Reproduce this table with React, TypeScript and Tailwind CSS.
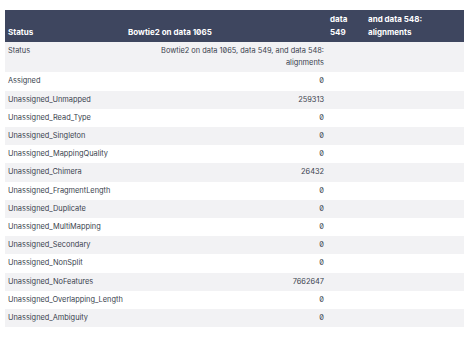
import React from 'react';

const rows: [string, string][] = [
  ['Assigned', '0'],
  ['Unassigned_Unmapped', '259313'],
  ['Unassigned_Read_Type', '0'],
  ['Unassigned_Singleton', '0'],
  ['Unassigned_MappingQuality', '0'],
  ['Unassigned_Chimera', '26432'],
  ['Unassigned_FragmentLength', '0'],
  ['Unassigned_Duplicate', '0'],
  ['Unassigned_MultiMapping', '0'],
  ['Unassigned_Secondary', '0'],
  ['Unassigned_NonSplit', '0'],
  ['Unassigned_NoFeatures', '7662647'],
  ['Unassigned_Overlapping_Length', '0'],
  ['Unassigned_Ambiguity', '0'],
];

const App: React.FC = () => {
  return (
    <div className="w-[474px] h-[351px] bg-white pt-[10px] pl-[5px] font-['Inter',sans-serif] text-[8px] text-[#2c3143] [font-feature-settings:'zero']">
      <table className="w-[459px] table-fixed border-collapse">
        <colgroup>
          <col className="w-[120px]" />
          <col className="w-[202px]" />
          <col className="w-[38px]" />
          <col className="w-[99px]" />
        </colgroup>
        <thead>
          <tr className="bg-[#3e465f] text-white font-bold leading-[12.5px]">
            <th className="px-[3px] pt-[3px] pb-[4px] text-left align-bottom">Status</th>
            <th className="px-[3px] pt-[3px] pb-[4px] text-left align-bottom">Bowtie2 on data 1065</th>
            <th className="px-[3px] pt-[3px] pb-[4px] text-left align-bottom">data 549</th>
            <th className="px-[3px] pt-[3px] pb-[4px] text-left align-bottom">and data 548: alignments</th>
          </tr>
        </thead>
        <tbody className="leading-[12.2px] text-[7.4px] text-[#3a3f4e]">
          <tr className="bg-[#f2f2f4]">
            <td className="px-[3px] py-[3px] align-top">Status</td>
            <td className="px-[3px] py-[3px] align-top text-right">
              Bowtie2 on data 1065, data 549, and data 548: alignments
            </td>
            <td />
            <td />
          </tr>
          {rows.map(([name, value], i) => (
            <tr key={name} className={i % 2 === 1 ? 'bg-[#f2f2f4]' : 'bg-white'}>
              <td className="px-[3px] py-[3px] align-top">{name}</td>
              <td className="px-[3px] py-[3px] align-top text-right">{value}</td>
              <td />
              <td />
            </tr>
          ))}
        </tbody>
      </table>
    </div>
  );
};

export default App;
